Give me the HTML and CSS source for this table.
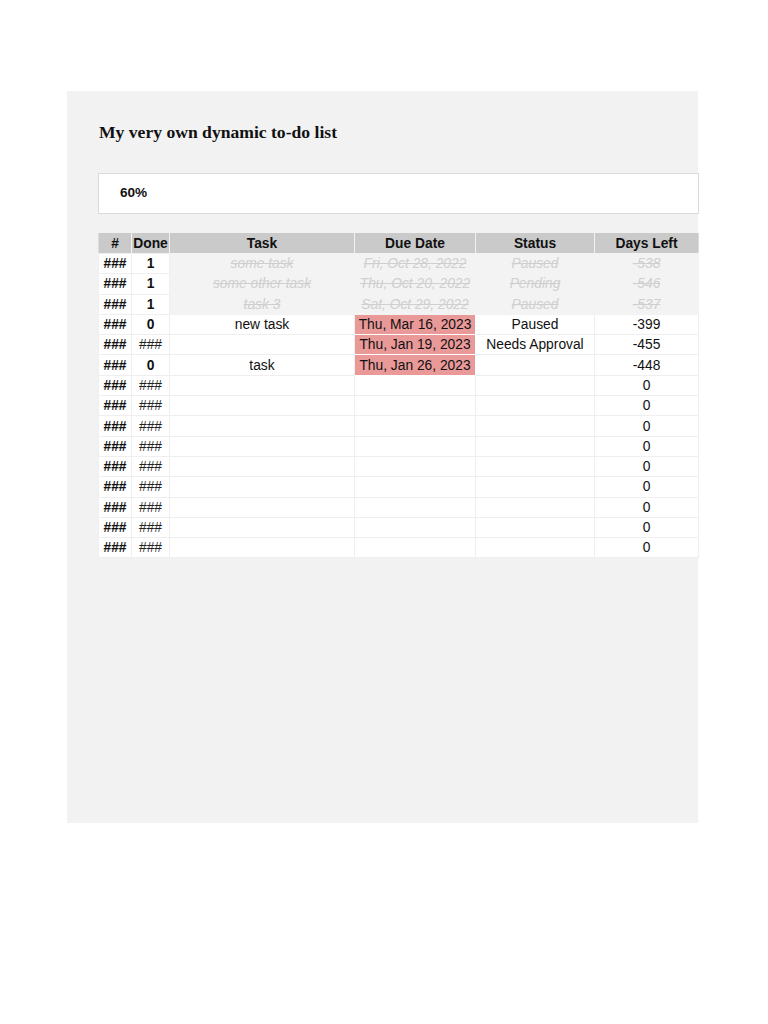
FILE: index.html
```html
<!DOCTYPE html>
<html>
<head>
<meta charset="utf-8">
<title>My very own dynamic to-do list</title>
<link rel="stylesheet" href="styles.css">
</head>
<body>
<div class="panel">
  <h1 class="title">My very own dynamic to-do list</h1>
  <div class="progress">60%</div>
  <table class="todo">
    <colgroup>
      <col class="c-num"><col class="c-done"><col class="c-task"><col class="c-due"><col class="c-status"><col class="c-days">
    </colgroup>
    <thead>
      <tr><th>#</th><th>Done</th><th>Task</th><th>Due Date</th><th>Status</th><th>Days Left</th></tr>
    </thead>
    <tbody>
      <tr class="done"><td class="num">###</td><td class="flag">1</td><td>some task</td><td>Fri, Oct 28, 2022</td><td>Paused</td><td>-538</td></tr>
      <tr class="done"><td class="num">###</td><td class="flag">1</td><td>some other task</td><td>Thu, Oct 20, 2022</td><td>Pending</td><td>-546</td></tr>
      <tr class="done"><td class="num">###</td><td class="flag">1</td><td>task 3</td><td>Sat, Oct 29, 2022</td><td>Paused</td><td>-537</td></tr>
      <tr><td class="num">###</td><td class="flag">0</td><td>new task</td><td class="overdue">Thu, Mar 16, 2023</td><td>Paused</td><td>-399</td></tr>
      <tr><td class="num">###</td><td class="hash">###</td><td></td><td class="overdue">Thu, Jan 19, 2023</td><td>Needs Approval</td><td>-455</td></tr>
      <tr><td class="num">###</td><td class="flag">0</td><td>task</td><td class="overdue">Thu, Jan 26, 2023</td><td></td><td>-448</td></tr>
      <tr><td class="num">###</td><td class="hash">###</td><td></td><td></td><td></td><td>0</td></tr>
      <tr><td class="num">###</td><td class="hash">###</td><td></td><td></td><td></td><td>0</td></tr>
      <tr><td class="num">###</td><td class="hash">###</td><td></td><td></td><td></td><td>0</td></tr>
      <tr><td class="num">###</td><td class="hash">###</td><td></td><td></td><td></td><td>0</td></tr>
      <tr><td class="num">###</td><td class="hash">###</td><td></td><td></td><td></td><td>0</td></tr>
      <tr><td class="num">###</td><td class="hash">###</td><td></td><td></td><td></td><td>0</td></tr>
      <tr><td class="num">###</td><td class="hash">###</td><td></td><td></td><td></td><td>0</td></tr>
      <tr><td class="num">###</td><td class="hash">###</td><td></td><td></td><td></td><td>0</td></tr>
      <tr><td class="num">###</td><td class="hash">###</td><td></td><td></td><td></td><td>0</td></tr>
    </tbody>
  </table>
</div>
</body>
</html>
```

FILE: styles.css
```css
html, body {
  margin: 0;
  padding: 0;
  background: #ffffff;
}

body {
  font-family: "Liberation Sans", Arial, sans-serif;
  color: #000;
}

.panel {
  margin: 91px 0 0 67px;
  width: 600px;
  height: 701px;
  padding: 31px 0 0 31px;
  background: #f2f2f2;
}

.title {
  margin: 0 0 0 1px;
  font-family: "Liberation Serif", "Times New Roman", serif;
  font-size: 17.6px;
  font-weight: bold;
  line-height: 20px;
  color: #111;
}

.progress {
  margin-top: 31px;
  box-sizing: border-box;
  width: 601px;
  height: 41px;
  padding-left: 21px;
  background: #fff;
  border: 1px solid #dadada;
  font-size: 13.6px;
  font-weight: bold;
  line-height: 38px;
  color: #111;
}

.todo {
  margin-top: 19px;
  width: 600px;
  table-layout: fixed;
  border-collapse: collapse;
  background: #fff;
  font-size: 13.8px;
  border: 1px solid #dcdcdc;
  border-top: none;
}

.c-num { width: 33px; }
.c-done { width: 38px; }
.c-task { width: 185px; }
.c-due { width: 121px; }
.c-status { width: 119px; }
.c-days { width: 104px; }

.todo th {
  height: 20px;
  padding: 0;
  background: #cacaca;
  font-weight: bold;
  text-align: center;
  border-left: 1px solid #f2f2f2;
  border-right: 1px solid #f2f2f2;
  color: #111;
}

.todo th:first-child { border-left: none; }
.todo th:last-child { border-right: none; }

.todo td {
  height: 18.3px;
  padding: 1px 0 0;
  text-align: center;
  white-space: nowrap;
  overflow: hidden;
  border: 1px solid #efefef;
  color: #111;
  line-height: 18px;
}

.todo td.num,
.todo td.flag {
  font-weight: bold;
}

.todo td.hash {
  font-weight: normal;
  color: #222;
}

.todo tr.done td {
  background: #f3f3f3;
  color: #cfcfcf;
  font-style: italic;
  text-decoration: line-through;
  border-color: #f3f3f3;
}

.todo tr.done td.num,
.todo tr.done td.flag {
  background: #fff;
  color: #111;
  font-style: normal;
  text-decoration: none;
  border-color: #efefef;
}

.todo td.overdue {
  background: #ea9999;
  border-color: #fff;
}
```
